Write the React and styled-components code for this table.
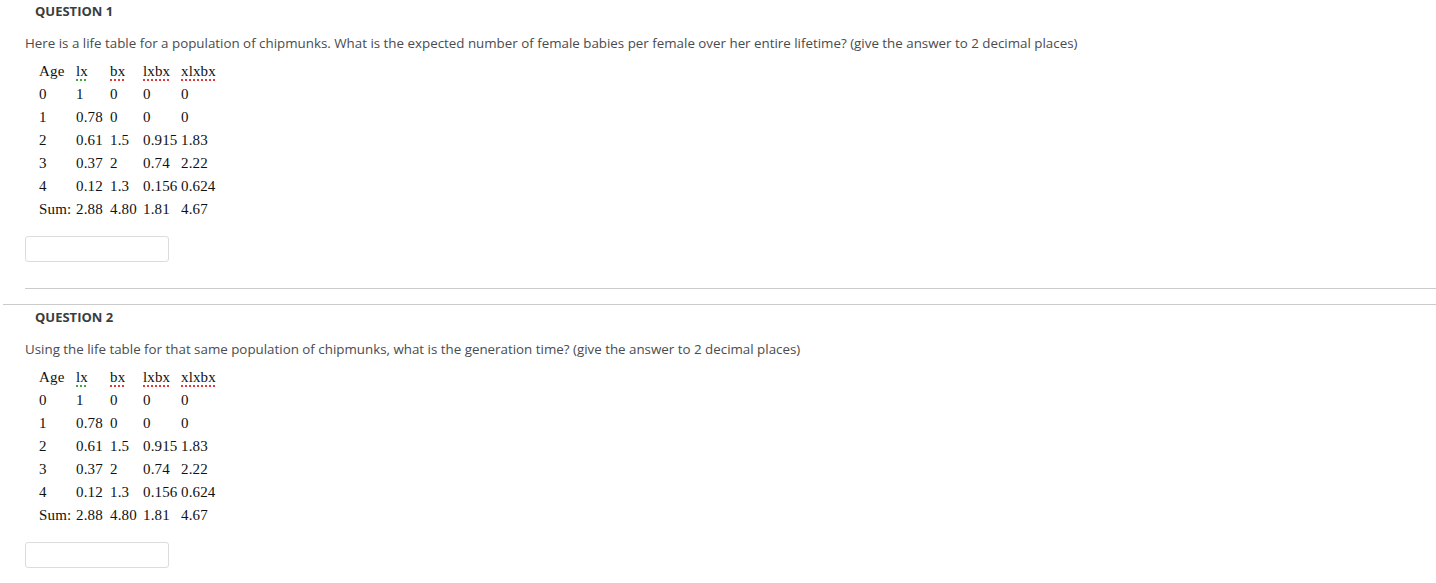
import React from 'react'
import styled, { createGlobalStyle } from 'styled-components'

const GlobalStyle = createGlobalStyle`
    html, body {
        margin: 0;
        padding: 0;
        background: #ffffff;
    }
`

const Page = styled.div`
    width: 1436px;
    overflow: hidden;
`

const Section = styled.section`
    margin-left: 3px;
    border-top: 1px solid ${(p) => (p.$first ? 'transparent' : '#cbcbcb')};
    margin-top: ${(p) => (p.$first ? '-2px' : '15px')};
    padding-top: 3px;
`

const Title = styled.h2`
    margin: 0;
    padding-left: 32px;
    font-family: 'Open Sans', sans-serif;
    font-size: 13px;
    line-height: 18px;
    font-weight: 700;
    color: #3a3d40;
`

const Body = styled.div`
    margin-left: 22px;
    padding-top: 14px;
    padding-bottom: 26px;
    border-bottom: 1px solid #cbcbcb;
`

const Prompt = styled.p`
    margin: 0;
    font-family: 'Open Sans', sans-serif;
    font-size: 13.35px;
    line-height: 18px;
    color: #494c4e;
`

const LifeTable = styled.table`
    margin: 8px 0 0 14px;
    border-collapse: collapse;
    table-layout: fixed;
    font-family: 'Liberation Serif', 'Times New Roman', serif;
    font-size: 15px;
    letter-spacing: 0.15px;
    color: #111;
`

const Cell = styled.td`
    padding: 0;
    height: 23px;
    line-height: 23px;
    vertical-align: middle;
    white-space: nowrap;
    width: ${(p) => (p.$w ? `${p.$w}px` : '60px')};
`

const Flagged = styled.span`
    text-decoration: underline dotted ${(p) => (p.$grammar ? '#3fa53f' : '#e03a3a')};
    text-decoration-thickness: 1.5px;
    text-underline-offset: 3px;
`

const Answer = styled.input`
    display: block;
    box-sizing: border-box;
    margin-top: 15px;
    width: 144px;
    height: 26px;
    border: 1px solid #dcdcdc;
    border-radius: 3px;
    background: #fff;
    outline: none;
`

const widths = [37, 34, 33, 38]

const rows = [
    ['0', '1', '0', '0', '0'],
    ['1', '0.78', '0', '0', '0'],
    ['2', '0.61', '1.5', '0.915', '1.83'],
    ['3', '0.37', '2', '0.74', '2.22'],
    ['4', '0.12', '1.3', '0.156', '0.624'],
    ['Sum:', '2.88', '4.80', '1.81', '4.67'],
]

function Table() {
    return (
        <LifeTable>
            <tbody>
                <tr>
                    <Cell $w={widths[0]}>Age</Cell>
                    <Cell $w={widths[1]}><Flagged $grammar>lx</Flagged></Cell>
                    <Cell $w={widths[2]}><Flagged>bx</Flagged></Cell>
                    <Cell $w={widths[3]}><Flagged>lxbx</Flagged></Cell>
                    <Cell><Flagged>xlxbx</Flagged></Cell>
                </tr>
                {rows.map((r, i) => (
                    <tr key={i}>
                        {r.map((v, j) => (
                            <Cell key={j} $w={widths[j]}>{v}</Cell>
                        ))}
                    </tr>
                ))}
            </tbody>
        </LifeTable>
    )
}

const questions = [
    {
        id: 1,
        text: 'Here is a life table for a population of chipmunks. What is the expected number of female babies per female over her entire lifetime? (give the answer to 2 decimal places)',
    },
    {
        id: 2,
        text: 'Using the life table for that same population of chipmunks, what is the generation time? (give the answer to 2 decimal places)',
    },
]

export default function App() {
    return (
        <>
            <GlobalStyle />
            <Page>
                {questions.map((q, i) => (
                    <Section key={q.id} $first={i === 0}>
                        <Title>QUESTION {q.id}</Title>
                        <Body>
                            <Prompt>{q.text}</Prompt>
                            <Table />
                            <Answer type="text" aria-label={`Answer ${q.id}`} />
                        </Body>
                    </Section>
                ))}
            </Page>
        </>
    )
}
